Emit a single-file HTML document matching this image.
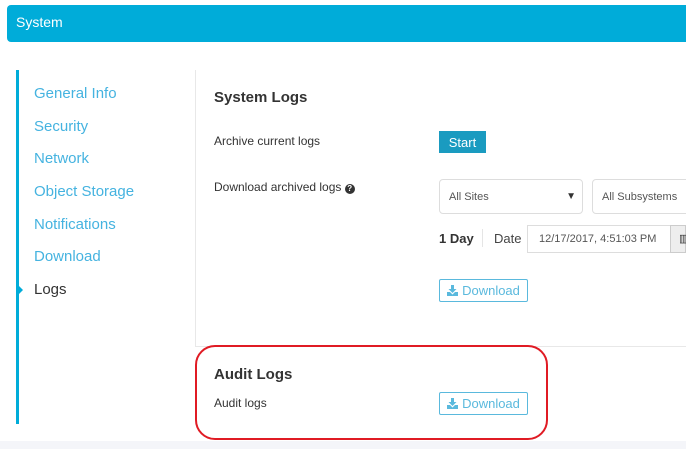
<!DOCTYPE html>
<html><head><style>
*{margin:0;padding:0;box-sizing:border-box}
body{width:686px;height:449px;overflow:hidden;background:#fff;font-family:"Liberation Sans",sans-serif;position:relative;color:#333}
.a{position:absolute;white-space:nowrap}
.nav{position:absolute;left:34px;font-size:15px;color:#45b3e0}
.btn{position:absolute;border:1px solid #5ab9dd;border-radius:2px;color:#5ab9dd;font-size:13px;display:flex;align-items:center;justify-content:center;gap:4px;background:#fff}
.sel{position:absolute;border:1px solid #ddd;border-radius:4px;font-size:11px;color:#555;padding-left:9px;display:flex;align-items:center}
</style></head><body>
<div class="a" style="left:7px;top:5px;width:690px;height:37px;background:#00acd9;border-radius:4px"></div>
<div class="a" style="left:16px;top:14px;color:#fff;font-size:14px">System</div>
<div class="a" style="left:16px;top:70px;width:3px;height:354px;background:#00acd9"></div>
<div class="a" style="left:19px;top:286px;width:0;height:0;border-left:4px solid #00acd9;border-top:4px solid transparent;border-bottom:4px solid transparent"></div>
<div class="nav" style="top:85px">General Info</div>
<div class="nav" style="top:118px">Security</div>
<div class="nav" style="top:150px">Network</div>
<div class="nav" style="top:183px">Object Storage</div>
<div class="nav" style="top:216px">Notifications</div>
<div class="nav" style="top:248px">Download</div>
<div class="nav" style="top:281px;color:#333">Logs</div>
<div class="a" style="left:195px;top:70px;width:1px;height:276px;background:#e8e8e8"></div>
<div class="a" style="left:195px;top:346px;width:491px;height:1px;background:#e8e8e8"></div>
<div class="a" style="left:0;top:441px;width:686px;height:8px;background:#f4f5f9"></div>
<div class="a" style="left:214px;top:89px;font-size:15px;font-weight:bold">System Logs</div>
<div class="a" style="left:214px;top:134px;font-size:12px">Archive current logs</div>
<div class="a" style="left:439px;top:131px;width:47px;height:22px;background:#1a9bc0;color:#fff;font-size:13px;display:flex;align-items:center;justify-content:center">Start</div>
<div class="a" style="left:214px;top:180px;font-size:12px">Download archived logs <span style="display:inline-block;width:10px;height:10px;border-radius:50%;background:#333;color:#fff;font-size:8px;text-align:center;line-height:10px;font-weight:bold">?</span></div>
<div class="sel" style="left:439px;top:179px;width:144px;height:35px">All Sites<span style="position:absolute;right:6px;font-size:10px;color:#333">▼</span></div>
<div class="sel" style="left:592px;top:179px;width:110px;height:35px">All Subsystems</div>
<div class="a" style="left:439px;top:231px;font-size:13px;font-weight:bold">1 Day</div>
<div class="a" style="left:482px;top:229px;width:1px;height:18px;background:#e5e5e5"></div>
<div class="a" style="left:494px;top:231px;font-size:13px;color:#444">Date</div>
<div class="a" style="left:527px;top:225px;width:160px;height:28px;border:1px solid #ddd;font-size:11px;color:#555;padding:7px 0 0 11px">12/17/2017, 4:51:03 PM</div>
<div class="a" style="left:670px;top:225px;width:16px;height:28px;background:#eee;border:1px solid #ccc;font-size:11px;padding:6px 0 0 8px">▥</div>
<div class="btn" style="left:439px;top:279px;width:89px;height:23px"><svg width="11" height="11" viewBox="0 0 11 11"><path d="M4 0h3v4h2.5L5.5 8 1.5 4H4z M0 7h3l2.5 2.5L8 7h3v4H0z" fill="#5ab9dd"/></svg>Download</div>
<div class="a" style="left:214px;top:366px;font-size:15px;font-weight:bold">Audit Logs</div>
<div class="a" style="left:214px;top:396px;font-size:12px">Audit logs</div>
<div class="btn" style="left:439px;top:392px;width:89px;height:23px"><svg width="11" height="11" viewBox="0 0 11 11"><path d="M4 0h3v4h2.5L5.5 8 1.5 4H4z M0 7h3l2.5 2.5L8 7h3v4H0z" fill="#5ab9dd"/></svg>Download</div>
<div class="a" style="left:195px;top:345px;width:353px;height:95px;border:2px solid #e01b24;border-radius:20px"></div>
</body></html>
